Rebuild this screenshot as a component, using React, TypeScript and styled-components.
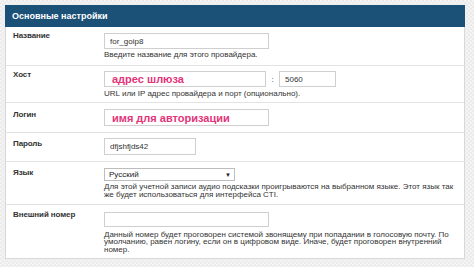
import styled, { createGlobalStyle } from 'styled-components'

const GlobalStyle = createGlobalStyle`
  html, body {
    margin: 0;
    padding: 0;
  }
  body {
    background: repeating-conic-gradient(#ebebeb 0 25%, #f4f4f4 0 50%) 0 0 / 4px 4px;
    font-family: 'Liberation Sans', Arial, sans-serif;
  }
`

const App = () => {
  return (
    <Page>
      <GlobalStyle />
      <Panel>
        <Header>Основные настройки</Header>

        <Row>
          <Label $top={4}>Название</Label>
          <Field $top={6} $bottom={6}>
            <TextInput $w={165} $h={16} defaultValue="for_goip8" />
            <Hint $mt={1}>Введите название для этого провайдера.</Hint>
          </Field>
        </Row>

        <Row>
          <Label $top={4}>Хост</Label>
          <Field $top={5} $bottom={4}>
            <Inline>
              <TextInput $w={162} $h={16} $accent defaultValue="адрес шлюза" />
              <Colon>:</Colon>
              <TextInput $w={57} $h={16} defaultValue="5060" />
            </Inline>
            <Hint $mt={2}>URL или IP адрес провайдера и порт (опционально).</Hint>
          </Field>
        </Row>

        <Row>
          <Label $top={7}>Логин</Label>
          <Field $top={6} $bottom={6}>
            <TextInput $w={165} $h={17} $accent defaultValue="имя для авторизации" />
          </Field>
        </Row>

        <Row>
          <Label $top={6}>Пароль</Label>
          <Field $top={5} $bottom={6}>
            <TextInput $w={92} $h={17} defaultValue="dfjshfjds42" />
          </Field>
        </Row>

        <Row>
          <Label $top={6}>Язык</Label>
          <Field $top={6} $bottom={5}>
            <Select>
              <span>Русский</span>
              <Arrow>▼</Arrow>
            </Select>
            <Hint $mt={2} $lh={8}>
              Для этой учетной записи аудио подсказки проигрываются на выбранном языке. Этот язык так
              <br />
              же будет использоваться для интерфейса CTI.
            </Hint>
          </Field>
        </Row>

        <Row>
          <Label $top={5}>Внешний номер</Label>
          <Field $top={7} $bottom={5}>
            <TextInput $w={165} $h={15} defaultValue="" />
            <Hint $mt={3.5} $lh={7.5}>
              Данный номер будет проговорен системой звонящему при попадании в голосовую почту. По
              <br />
              умолчанию, равен логину, если он в цифровом виде. Иначе, будет проговорен внутренний
              <br />
              номер.
            </Hint>
          </Field>
        </Row>
      </Panel>
    </Page>
  )
}

export default App

const Page = styled.div`
  width: 474px;
  height: 267px;
  box-sizing: border-box;
  padding: 5px 9px 0 5px;
`

const Panel = styled.div`
  width: 460px;
  box-sizing: border-box;
  background: #fff;
  border: 1px solid #d8d8d8;
  border-top: none;
`

const Header = styled.div`
  height: 22px;
  margin: 0 -1px;
  padding-left: 7px;
  background: #1b5077;
  color: #fff;
  font-size: 9px;
  font-weight: bold;
  line-height: 22px;
`

const Row = styled.div`
  display: grid;
  grid-template-columns: 96px 1fr;
  & + & {
    border-top: 1px solid #e2e2e2;
  }
`

const Label = styled.div<{ $top: number }>`
  padding: ${(p) => p.$top}px 0 0 7px;
  color: #333;
  font-size: 8px;
  font-weight: bold;
  line-height: 9px;
  letter-spacing: -0.1px;
`

const Field = styled.div<{ $top: number; $bottom: number }>`
  padding: ${(p) => p.$top}px 0 ${(p) => p.$bottom}px 2px;
  display: flex;
  flex-direction: column;
  align-items: flex-start;
`

const Inline = styled.div`
  display: flex;
  align-items: center;
`

const TextInput = styled.input<{ $w: number; $h: number; $accent?: boolean }>`
  width: ${(p) => p.$w}px;
  height: ${(p) => p.$h}px;
  box-sizing: border-box;
  margin: 0;
  border: 1px solid #cfcfcf;
  background: #fff;
  padding: 0 ${(p) => (p.$accent ? 7 : 5)}px;
  font-family: 'Liberation Sans', Arial, sans-serif;
  font-size: ${(p) => (p.$accent ? 11 : 8)}px;
  font-weight: ${(p) => (p.$accent ? 'bold' : 'normal')};
  color: ${(p) => (p.$accent ? '#e4347a' : '#333')};
  outline: none;
`

const Colon = styled.span`
  width: 13px;
  text-align: center;
  font-size: 8px;
  color: #333;
`

const Select = styled.div`
  width: 131px;
  height: 13px;
  box-sizing: border-box;
  border: 1px solid #bdbdbd;
  padding: 0 3px 0 4px;
  display: flex;
  align-items: center;
  justify-content: space-between;
  font-size: 8px;
  color: #222;
`

const Arrow = styled.span`
  font-size: 6px;
  color: #222;
`

const Hint = styled.div<{ $mt: number; $lh?: number }>`
  margin: ${(p) => p.$mt}px 0 0 0;
  color: #333;
  font-size: 8px;
  line-height: ${(p) => p.$lh ?? 9}px;
  white-space: nowrap;
`
